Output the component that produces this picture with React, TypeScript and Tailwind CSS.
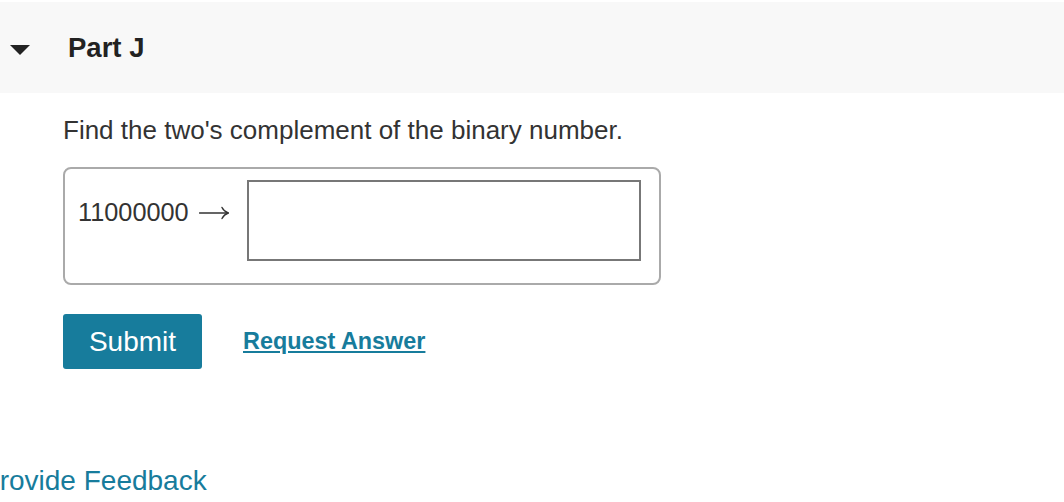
import React from "react";

export default function App() {
  const font = { fontFamily: '"Liberation Sans", Arial, Helvetica, sans-serif' };
  return (
    <div className="w-[1064px] h-[502px] overflow-hidden bg-white text-[#333]" style={font}>
      <div className="mt-[2px] h-[91px] bg-[#f8f8f8] flex items-center">
        <svg width="20" height="10" viewBox="0 0 20 10" className="ml-[10px] mt-[4px]">
          <path d="M0 0 L20 0 L10 10 Z" fill="#222" />
        </svg>
        <span className="ml-[38px] text-[27.5px] font-bold text-[#222] leading-none">Part J</span>
      </div>
      <div className="pl-[63px]">
        <p className="mt-[22px] text-[26px] leading-[30px]">Find the two's complement of the binary number.</p>
        <div className="mt-[22px] w-[598px] h-[118px] border-2 border-[#aaa] rounded-[8px] flex items-start pl-[13px] pt-[11px]">
          <div className="mt-[17px] h-[30px] flex items-center">
            <span className="text-[25.3px] leading-[30px] whitespace-nowrap">11000000</span>
            <svg width="30" height="14" viewBox="0 0 30 14" className="ml-[10px] mt-[2px]" fill="none" stroke="#333" strokeWidth="1.4" strokeLinecap="round">
              <path d="M0.5 7 H29" />
              <path d="M23 1.5 Q25 5.5 29.2 7 Q25 8.5 23 12.5" />
            </svg>
          </div>
          <div className="ml-[18px] w-[394px] h-[81px] border-2 border-[#777] bg-white"></div>
        </div>
        <div className="mt-[29px] flex items-center">
          <button className="w-[139px] h-[55px] bg-[#177c9c] rounded-[3px] text-white text-[28px] leading-none">Submit</button>
          <a className="ml-[41px] text-[23.4px] font-bold text-[#177c9c] underline">Request Answer</a>
        </div>
      </div>
      <div className="mt-[96px] ml-[-19px] text-[28px] leading-[32px] text-[#177c9c]">Provide Feedback</div>
    </div>
  );
}
